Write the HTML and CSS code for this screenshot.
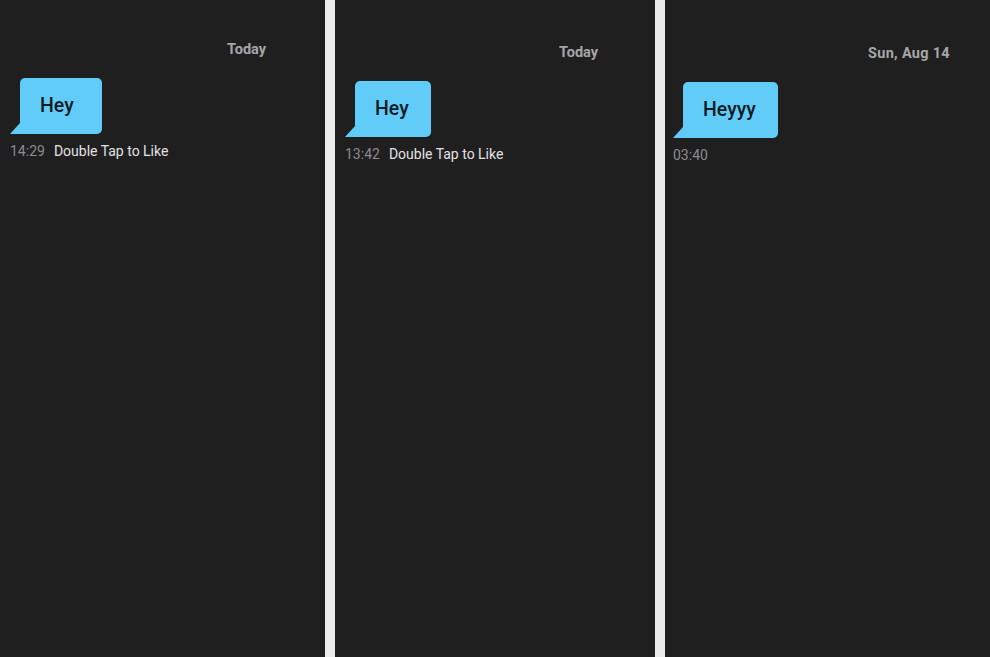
FILE: index.html
```html
<!DOCTYPE html>
<html>
<head>
<meta charset="utf-8">
<link rel="stylesheet" href="styles.css">
</head>
<body>
<div class="screens">
  <section class="panel panel-1">
    <div class="date">Today</div>
    <div class="bubble bubble-wide">Hey</div>
    <div class="meta"><span class="time">14:29</span><span class="hint">Double Tap to Like</span></div>
  </section>
  <section class="panel panel-2">
    <div class="date">Today</div>
    <div class="bubble">Hey</div>
    <div class="meta"><span class="time">13:42</span><span class="hint">Double Tap to Like</span></div>
  </section>
  <section class="panel panel-3">
    <div class="date date-long">Sun, Aug 14</div>
    <div class="bubble">Heyyy</div>
    <div class="meta"><span class="time">03:40</span></div>
  </section>
</div>
</body>
</html>
```
FILE: styles.css
```css
html, body {
  margin: 0;
  padding: 0;
  background: #ececec;
}
.screens {
  display: flex;
  gap: 10px;
  height: 657px;
  width: 990px;
  font-family: Roboto, "Liberation Sans", sans-serif;
}
.panel {
  background: #1f1f20;
  display: flex;
  flex-direction: column;
  align-items: flex-start;
  box-sizing: border-box;
}
.panel-1 { width: 325px; padding: 40px 59px 0 10px; }
.panel-2 { width: 320px; padding: 43px 57px 0 10px; }
.panel-3 { width: 325px; padding: 44px 40px 0 8px; }
.date {
  align-self: flex-end;
  font-size: 14.5px;
  font-weight: 700;
  line-height: 20px;
  color: #a6a6a8;
}
.date-long { letter-spacing: 0.3px; }
.bubble {
  position: relative;
  margin: 18px 0 0 10px;
  height: 56px;
  line-height: 56px;
  padding: 0 22px 0 20px;
  background: #62ccf9;
  color: #0e1a22;
  font-size: 19.5px;
  font-weight: 500;
  border-radius: 5px 5px 5px 0;
}
.bubble-wide { padding-right: 28px; }
.bubble::before {
  content: "";
  position: absolute;
  left: -10px;
  bottom: 0;
  border-bottom: 11px solid #62ccf9;
  border-left: 10px solid transparent;
}
.meta {
  margin-top: 9px;
  display: flex;
  gap: 9px;
  font-size: 14px;
  line-height: 16px;
}
.time { color: #8c8c8e; }
.hint { color: #e2e2e2; }
```
